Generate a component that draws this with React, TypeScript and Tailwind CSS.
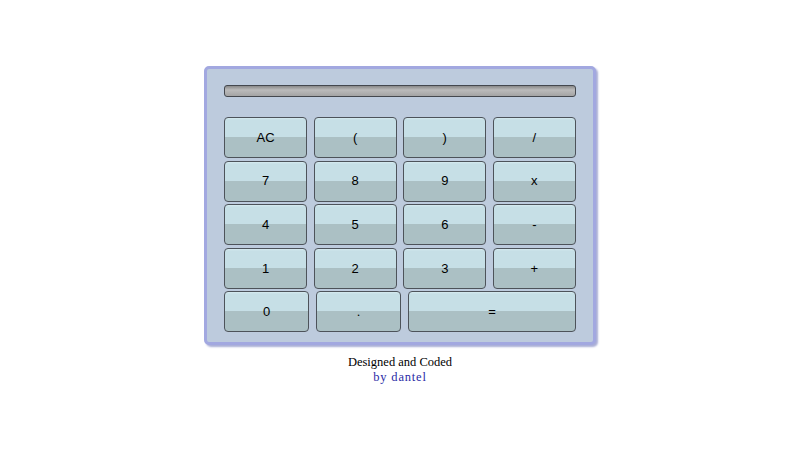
import React from 'react';

const rows: string[][] = [
  ['AC', '(', ')', '/'],
  ['7', '8', '9', 'x'],
  ['4', '5', '6', '-'],
  ['1', '2', '3', '+'],
];

const Key: React.FC<{ label: string; className?: string }> = ({ label, className = '' }) => (
  <button
    className={`relative h-[41px] rounded-[4px] border border-[#4d535a] bg-[linear-gradient(to_bottom,#d6ebf0_0px,#c6dfe6_2px,#c6dfe6_48%,#abc0c4_48%,#abc0c4_100%)] text-[13px] text-black ${className}`}
    style={{ fontFamily: '"Liberation Sans", Arial, sans-serif' }}
  >
    {label}
  </button>
);

export default function App() {
  return (
    <div className="flex min-h-[450px] w-full flex-col items-center bg-white pt-[66px]">
      {/* calculator body */}
      <div className="flex w-[392px] flex-col rounded-[5px] border-[3px] border-[#a2a8e0] bg-[#bdcbdd] px-[17px] pb-[10px] pt-[16px] shadow-[2px_2px_2px_#a9aed6]">
        <div className="h-[12px] w-full rounded-[3px] border border-[#44484e] bg-[linear-gradient(to_bottom,#8a8a8a,#bbbbbb_40%,#a4a4a4)]" />

        <div className="mt-[20px] flex flex-col gap-[2.6px]">
          {rows.map((row, i) => (
            <div key={i} className="grid grid-cols-4 gap-x-[6.3px]">
              {row.map((k) => (
                <Key key={k} label={k} />
              ))}
            </div>
          ))}
          <div className="flex gap-[7px]">
            <Key label="0" className="flex-1" />
            <Key label="." className="flex-1" />
            <Key label="=" className="flex-[2]" />
          </div>
        </div>
      </div>

      {/* credits */}
      <div className="mt-[10px] text-center leading-[15px]" style={{ fontFamily: '"Liberation Serif", "Times New Roman", serif' }}>
        <p className="text-[12.5px] text-black">Designed and Coded</p>
        <p className="text-[12.5px] tracking-[0.8px] text-[#2a2aa6]">by dantel</p>
      </div>
    </div>
  );
}
